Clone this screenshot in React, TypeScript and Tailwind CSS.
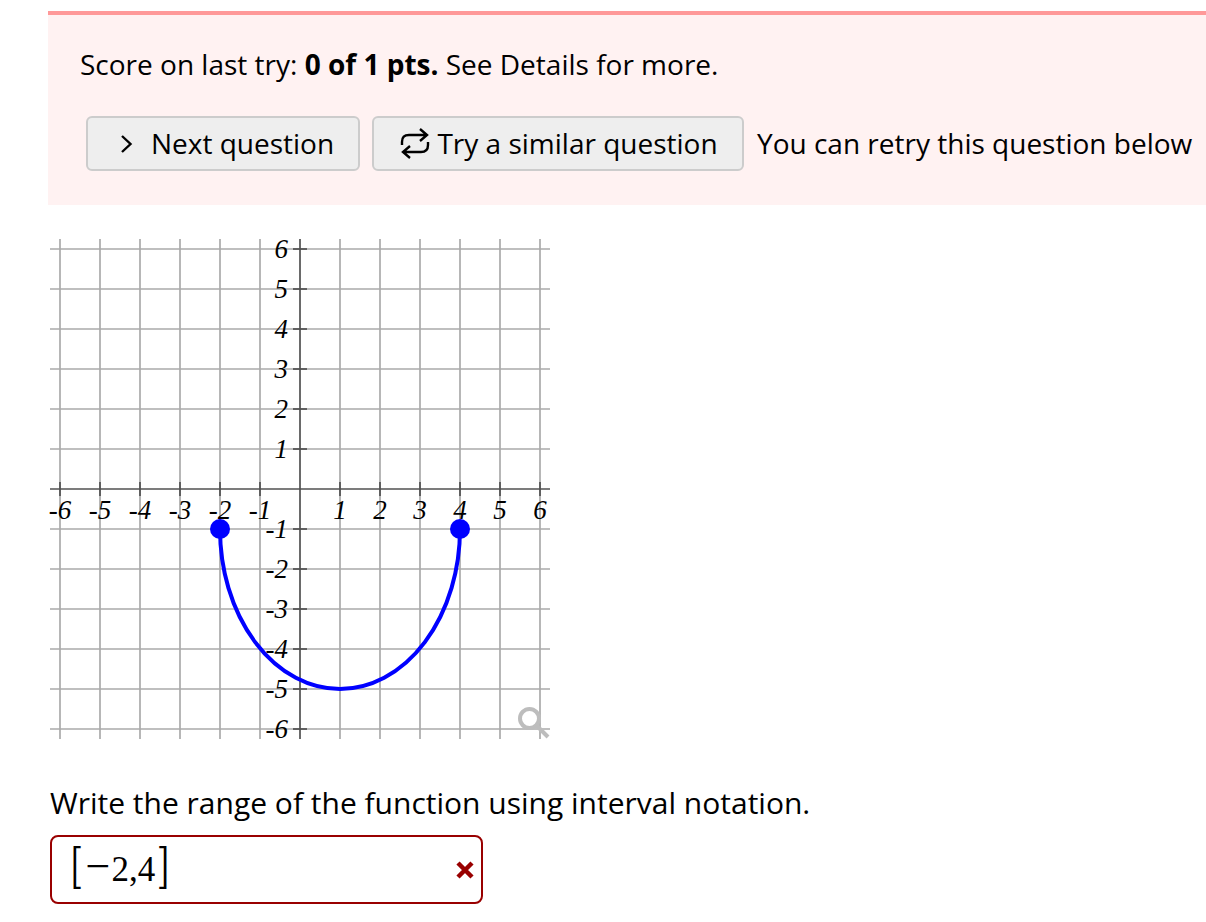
const font = { fontFamily: '"Liberation Serif", serif' };
const gridPositions = [-6, -5, -4, -3, -2, -1, 0, 1, 2, 3, 4, 5, 6];
const px = (v: number) => 300 + v * 40;
const py = (v: number) => 249 + (6 - v) * 40;

function Graph() {
  return (
    <svg width={504} height={522} viewBox="48 228 504 522" className="block" style={font}>
      {gridPositions.filter((v) => v !== 0).map((v) => (
        <g key={v}>
          <line x1={px(v)} x2={px(v)} y1={239} y2={739} stroke="#aaaaaa" strokeWidth={1.7} />
          <line x1={50} x2={550} y1={py(v)} y2={py(v)} stroke="#aaaaaa" strokeWidth={1.7} />
        </g>
      ))}
      <line x1={300} x2={300} y1={239} y2={739} stroke="#505050" strokeWidth={1.7} />
      <line x1={50} x2={550} y1={489} y2={489} stroke="#505050" strokeWidth={1.7} />
      {gridPositions.filter((v) => v !== 0).map((v) => (
        <g key={v}>
          <line x1={px(v)} x2={px(v)} y1={482} y2={496} stroke="#505050" strokeWidth={1.7} />
          <line x1={293} x2={307} y1={py(v)} y2={py(v)} stroke="#505050" strokeWidth={1.7} />
          <text x={px(v)} y={519} textAnchor="middle" fontSize={27} fontStyle="italic" fill="#000">{v}</text>
          <text x={288} y={py(v) + 9} textAnchor="end" fontSize={27} fontStyle="italic" fill="#000">{v}</text>
        </g>
      ))}
      <path d="M220 529 A120 160 0 0 0 460 529" fill="none" stroke="#0000ff" strokeWidth={4} />
      <circle cx={220} cy={529} r={10} fill="#0000ff" />
      <circle cx={460} cy={529} r={10} fill="#0000ff" />
      <g fill="none" stroke="#bdbdbd">
        <circle cx={529.5} cy={718.5} r={9.5} strokeWidth={4} />
        <line x1={537} x2={548} y1={726} y2={737} strokeWidth={4} />
      </g>
    </svg>
  );
}

export default function App() {
  return (
    <div className="bg-white text-black text-[28px] leading-[38px] h-[922px] overflow-hidden pt-[11px]" style={{ fontFamily: '"Open Sans", sans-serif' }}>
      <div className="ml-[48px] bg-[#fff2f2] border-t-4 border-[#ff9999] h-[194px] pl-[32px] pt-[30px]">
        <p>Score on last try: <b className="font-bold">0 of 1 pts.</b> See Details for more.</p>
        <div className="flex items-center mt-[33px] ml-[6px] whitespace-nowrap">
          <button className="flex items-center justify-center w-[274px] h-[55px] pl-[10px] pb-[2px] bg-[#eeeeee] border-2 border-[#cccccc] rounded-[6px]">
            <svg width="14" height="20" viewBox="0 0 14 20" fill="none" stroke="#000" strokeWidth="2.4" className="mr-[17px] ml-[-2px] mt-[2px]">
              <path d="M2 2 L10.5 10 L2 18" />
            </svg>
            Next question
          </button>
          <button className="flex items-center justify-center w-[372px] h-[55px] ml-[12px] pl-[2px] pb-[2px] bg-[#eeeeee] border-2 border-[#cccccc] rounded-[6px]">
            <svg width="30" height="33" viewBox="0 0 30 33" fill="none" stroke="#000" strokeWidth="2.4" className="mr-[7px] mt-[2px]">
              <path d="M20 2 L27 8 L20 14 M27 8 H9 Q2 8 2 15 V18" />
              <path d="M10 19 L3 25 L10 31 M3 25 H21 Q28 25 28 18 V15" />
            </svg>
            Try a similar question
          </button>
          <span className="ml-[13px] mb-[2px]">You can retry this question below</span>
        </div>
      </div>
      <div className="ml-[48px] mt-[23px]">
        <Graph />
      </div>
      <p className="ml-[50px] mt-[34px] text-[30px]">Write the range of the function using interval notation.</p>
      <div className="ml-[50px] mt-[13px] w-[433px] h-[69px] border-2 border-[#990000] rounded-[8px] flex items-center justify-between pl-[18px] pr-[7px] bg-white">
        <span className="flex items-center text-[35px] leading-none" style={font}>
          <span className="text-[44px] font-light leading-none mt-[-6px]" style={{ fontFamily: 'Roboto, sans-serif' }}>[</span>
          <span className="ml-[5px] text-[44px] mt-[-5px]">−</span>
          <span className="ml-[1px]">2,4</span>
          <span className="text-[44px] font-light leading-none ml-[4px] mt-[-6px]" style={{ fontFamily: 'Roboto, sans-serif' }}>]</span>
        </span>
        <svg width="18" height="18" viewBox="0 0 18 18" stroke="#990000" strokeWidth="4.5" fill="none" className="mt-[1px]">
          <path d="M2 2 L16 16 M16 2 L2 16" />
        </svg>
      </div>
    </div>
  );
}
